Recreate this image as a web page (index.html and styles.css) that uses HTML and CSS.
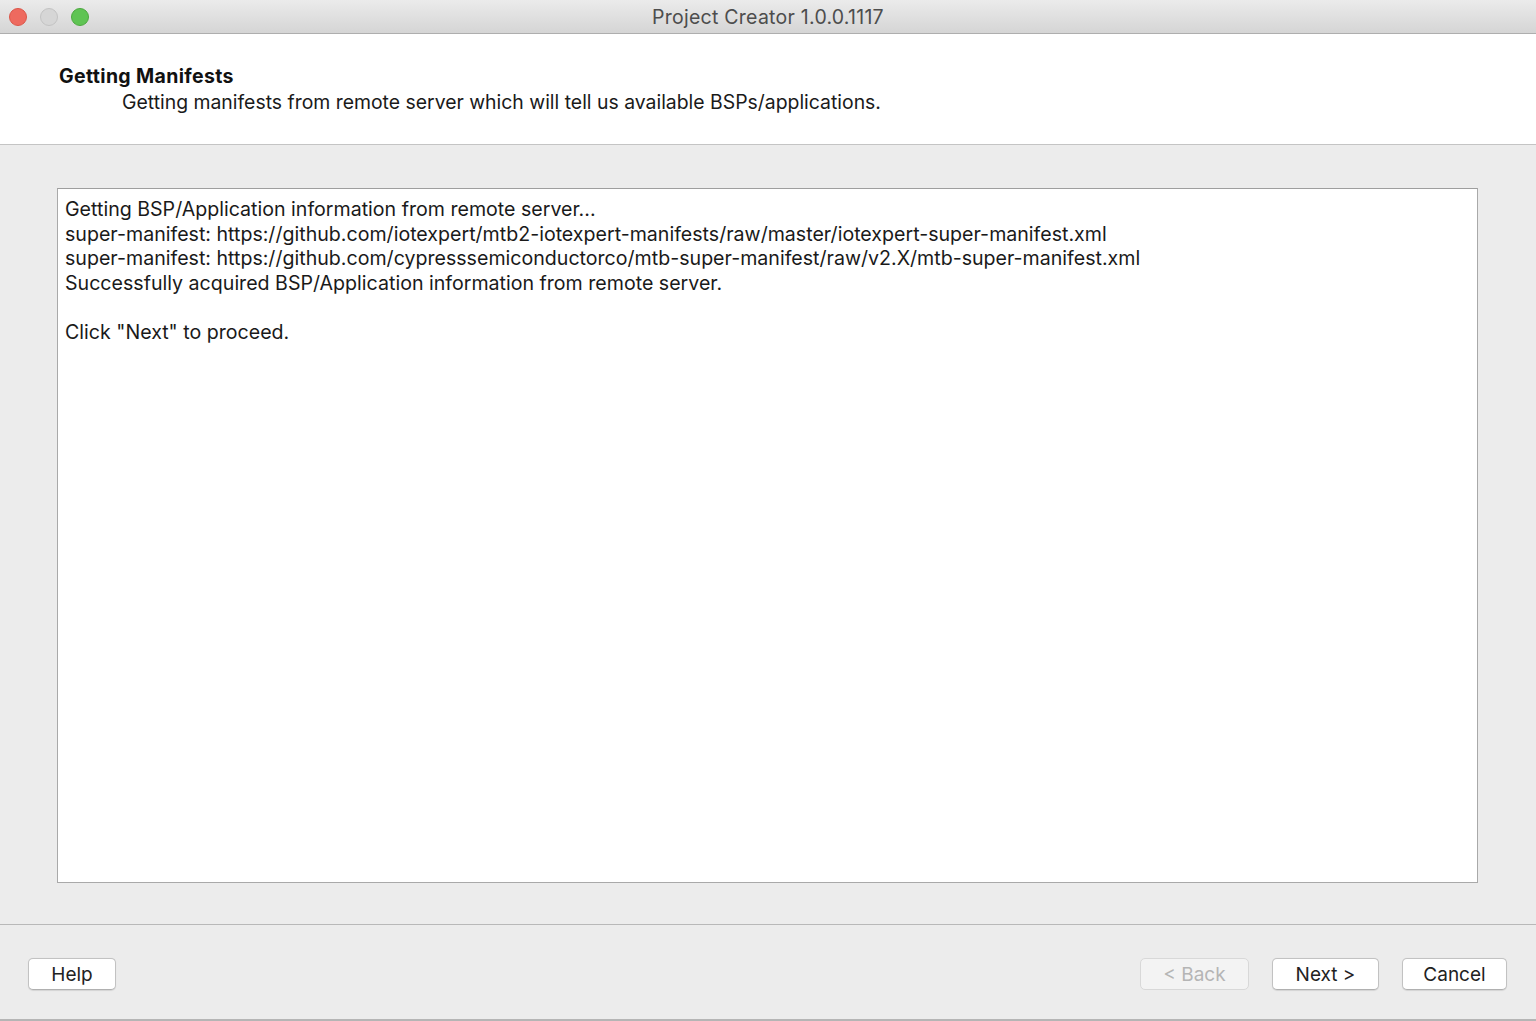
FILE: index.html
```html
<!DOCTYPE html>
<html>
<head>
<meta charset="utf-8">
<link rel="stylesheet" href="styles.css">
</head>
<body>
<div class="window">
  <div class="titlebar">
    <div class="lights">
      <span class="light red"></span>
      <span class="light grey"></span>
      <span class="light green"></span>
    </div>
    <div class="title">Project Creator 1.0.0.1117</div>
  </div>
  <div class="header">
    <div class="h-title">Getting Manifests</div>
    <div class="h-sub">Getting manifests from remote server which will tell us available BSPs/applications.</div>
  </div>
  <div class="body">
    <div class="log">
      <div class="line">Getting BSP/Application information from remote server...</div>
      <div class="line">super-manifest: https://github.com/iotexpert/mtb2-iotexpert-manifests/raw/master/iotexpert-super-manifest.xml</div>
      <div class="line">super-manifest: https://github.com/cypresssemiconductorco/mtb-super-manifest/raw/v2.X/mtb-super-manifest.xml</div>
      <div class="line">Successfully acquired BSP/Application information from remote server.</div>
      <div class="line">&nbsp;</div>
      <div class="line">Click "Next" to proceed.</div>
    </div>
  </div>
  <div class="footer">
    <button class="btn btn-help">Help</button>
    <div class="spacer"></div>
    <button class="btn btn-back" disabled>&lt; Back</button>
    <button class="btn btn-next">Next &gt;</button>
    <button class="btn btn-cancel">Cancel</button>
  </div>
</div>
</body>
</html>
```

FILE: styles.css
```css
html, body {
  margin: 0;
  padding: 0;
  width: 1536px;
  height: 1021px;
  overflow: hidden;
  background: #ececec;
  font-family: Inter, "Liberation Sans", Arial, sans-serif;
}

.window {
  display: flex;
  flex-direction: column;
  width: 1536px;
  height: 1021px;
}

.titlebar {
  position: relative;
  height: 33px;
  flex: none;
  background: linear-gradient(#ebebeb, #d5d5d5);
  border-bottom: 1px solid #aeaeae;
  display: flex;
  align-items: center;
  justify-content: center;
}

.lights {
  position: absolute;
  left: 9px;
  top: 8px;
  display: flex;
  gap: 13px;
}

.light {
  width: 18px;
  height: 18px;
  border-radius: 50%;
  box-sizing: border-box;
}

.light.red { background: #ee6a5f; border: 1px solid #dc5548; }
.light.grey { background: #d6d6d6; border: 1px solid #c3c3c3; }
.light.green { background: #5fc453; border: 1px solid #4ca83f; }

.title {
  font-size: 19.5px;
  letter-spacing: 0.25px;
  color: #4d4d4d;
  padding-top: 1px;
}

.header {
  flex: none;
  height: 111px;
  background: #ffffff;
  border-bottom: 1px solid #c4c4c4;
  box-sizing: border-box;
  padding: 0 0 0 59px;
  display: flex;
  flex-direction: column;
  justify-content: flex-start;
}

.h-title {
  margin-top: 31px;
  font-weight: 700;
  font-size: 19.5px;
  letter-spacing: 0.35px;
  color: #111;
  line-height: 22px;
}

.h-sub {
  margin-top: 4px;
  margin-left: 63px;
  font-size: 19.4px;
  color: #1a1a1a;
  line-height: 22px;
}

.body {
  flex: none;
  height: 780px;
  box-sizing: border-box;
  padding: 43px 58px 41px 57px;
  border-bottom: 1px solid #b8b8b8;
  display: flex;
}

.log {
  flex: 1;
  background: #ffffff;
  border: 1px solid #a9a9a9;
  border-top-color: #9e9e9e;
  padding: 8px 7px;
  font-size: 19.6px;
  color: #1a1a1a;
}

.line {
  line-height: 24.6px;
  white-space: nowrap;
}

.footer {
  flex: 1;
  display: flex;
  align-items: flex-start;
  padding: 33px 29px 0 28px;
  gap: 23px;
  border-bottom: 2px solid #b5b5b5;
  box-sizing: border-box;
}

.spacer { flex: 1; }

.btn {
  height: 32px;
  box-sizing: border-box;
  background: #ffffff;
  border: 1px solid #c2c2c2;
  border-bottom-color: #b0b0b0;
  border-radius: 5px;
  font-family: Inter, "Liberation Sans", Arial, sans-serif;
  font-size: 19px;
  color: #222;
  padding: 0;
  box-shadow: 0 0.5px 1px rgba(0,0,0,0.1);
}

.btn-help { width: 88px; }
.btn-back { width: 109px; color: #b5b5b5; background: #f3f3f3; border-color: #d8d8d8; box-shadow: none; }
.btn-next { width: 107px; }
.btn-cancel { width: 105px; }
```
